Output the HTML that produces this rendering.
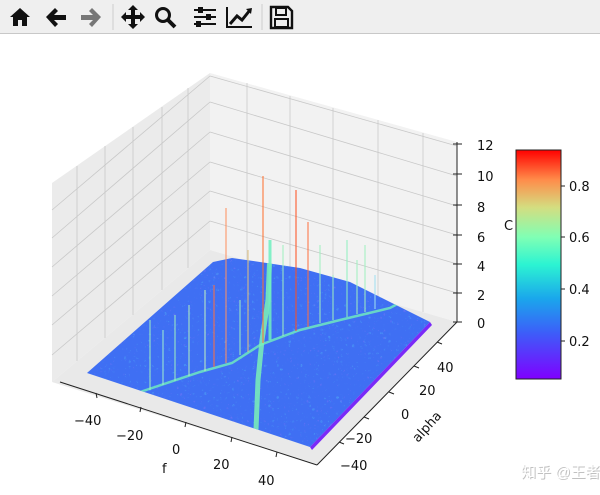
<!DOCTYPE html>
<html><head><meta charset="utf-8"><style>
html,body{margin:0;padding:0;width:600px;height:495px;overflow:hidden;background:#fff;font-family:"Liberation Sans","DejaVu Sans",sans-serif}
.tb{position:absolute;left:0;top:0;width:600px;height:33px;background:#efefef;border-bottom:1px solid #c8c8c8}
svg{position:absolute;left:0;top:0}
</style></head><body>
<div class="tb">
<svg width="600" height="33" viewBox="0 0 600 33">
<g fill="#111">
<path d="M10 17 L20 8 L30 17 L27 17 L27 26 L22 26 L22 20 L18 20 L18 26 L13 26 L13 17 Z"/>
<path d="M46 17 L55 8 L58 11 L54 15 L66 15 L66 20 L54 20 L58 24 L55 27 Z"/>
</g>
<path fill="#777" d="M101 17 L92 8 L89 11 L93 15 L81 15 L81 20 L93 20 L89 24 L92 27 Z"/>
<line x1="113" y1="4" x2="113" y2="30" stroke="#ccc"/>
<path fill="#111" d="M133 5 L138 10 L135 10 L135 15 L140 15 L140 12 L145 17 L140 22 L140 19 L135 19 L135 24 L138 24 L133 29 L128 24 L131 24 L131 19 L126 19 L126 22 L121 17 L126 12 L126 15 L131 15 L131 10 L128 10 Z"/>
<circle cx="163" cy="15" r="6.5" fill="none" stroke="#111" stroke-width="3"/>
<line x1="168" y1="20" x2="175" y2="27" stroke="#111" stroke-width="4"/>
<g fill="#111">
<rect x="194" y="9" width="22" height="2"/><rect x="194" y="16" width="22" height="2"/><rect x="194" y="23" width="22" height="2"/>
<rect x="198" y="7" width="5" height="6"/><rect x="206" y="14" width="5" height="6"/><rect x="196" y="21" width="5" height="6"/>
</g>
<path d="M227 7 L227 27 L252 27" fill="none" stroke="#111" stroke-width="2"/>
<path d="M230 24 L237 16 L242 20 L250 10" fill="none" stroke="#111" stroke-width="3"/>
<path d="M246 9 L252 8 L251 14 Z" fill="#111"/>
<line x1="262" y1="4" x2="262" y2="30" stroke="#ccc"/>
<path d="M271 7 L288 7 L292 11 L292 28 L271 28 Z" fill="none" stroke="#111" stroke-width="2.4"/>
<rect x="276" y="8" width="10" height="7" fill="none" stroke="#111" stroke-width="2"/>
<rect x="275" y="19" width="13" height="8" fill="none" stroke="#111" stroke-width="2"/>
</svg></div>

<svg width="600" height="495" viewBox="0 0 600 495">
<defs>
<linearGradient id="cb" x1="0" y1="1" x2="0" y2="0">
<stop offset="0" stop-color="#7f00ff"/><stop offset="0.2" stop-color="#3d5df9"/><stop offset="0.35" stop-color="#1aa6ec"/><stop offset="0.5" stop-color="#2cf4d2"/><stop offset="0.62" stop-color="#80ffb4"/><stop offset="0.75" stop-color="#d4dd80"/><stop offset="0.87" stop-color="#ff8c4a"/><stop offset="1" stop-color="#ff0000"/>
</linearGradient>
<clipPath id="sc"><polygon points="87,373 213,262 232,258 260,262 300,268 350,282 430,322 310,447"/></clipPath>
<filter id="n" x="0" y="0" width="100%" height="100%"><feTurbulence baseFrequency="0.25" numOctaves="2" seed="3"/><feColorMatrix values="0 0 0 0 0.1  0 0 0 0 0.6  0 0 0 0 0.95  0 0 0 1.6 -0.75"/></filter>
<filter id="n2" x="0" y="0" width="100%" height="100%"><feTurbulence baseFrequency="0.3" numOctaves="2" seed="9"/><feColorMatrix values="0 0 0 0 0.4  0 0 0 0 0.2  0 0 0 0 1  0 0 0 1.6 -0.8"/></filter>
</defs>
<polygon points="52,183 210,73 210,250 52,382" fill="#ebebeb"/>
<polygon points="210,73 457,142 457,322 210,250" fill="#f2f2f2"/>
<polygon points="52,382 210,250 457,322 317,465" fill="#e9e9e9"/>
<g stroke="#c8c8c8" stroke-width="0.8" fill="none">
<line x1="247" y1="83" x2="247" y2="261"/><line x1="290" y1="96" x2="290" y2="273"/><line x1="333" y1="108" x2="333" y2="286"/><line x1="378" y1="120" x2="378" y2="299"/><line x1="423" y1="133" x2="423" y2="312"/>
<line x1="77" y1="166" x2="77" y2="361"/><line x1="105" y1="146" x2="105" y2="338"/><line x1="133" y1="127" x2="133" y2="315"/><line x1="162" y1="107" x2="162" y2="290"/><line x1="188" y1="88" x2="188" y2="268"/>
<line x1="210" y1="221" x2="457" y2="293"/><line x1="210" y1="191" x2="457" y2="264"/><line x1="210" y1="162" x2="457" y2="235"/><line x1="210" y1="132" x2="457" y2="206"/><line x1="210" y1="102" x2="457" y2="176"/><line x1="210" y1="76" x2="457" y2="146"/>
<line x1="52" y1="355" x2="210" y2="221"/><line x1="52" y1="325" x2="210" y2="191"/><line x1="52" y1="296" x2="210" y2="162"/><line x1="52" y1="267" x2="210" y2="132"/><line x1="52" y1="238" x2="210" y2="102"/><line x1="52" y1="210" x2="210" y2="76"/>
</g>
<g clip-path="url(#sc)">
<rect x="80" y="250" width="360" height="205" fill="#3f6ff3"/>
<rect x="80" y="250" width="360" height="205" filter="url(#n)" opacity="0.8"/>
<rect x="80" y="250" width="360" height="205" filter="url(#n2)" opacity="0.7"/>
<path d="M140 392 L200 372 L232 363 L260 345 L300 330 L340 320 L390 308 L405 300" stroke="#6fe9c0" stroke-width="2.5" fill="none" opacity="0.85"/>
<path d="M270 250 L268 300 L262 340 L258 380 L256 430" stroke="#7bf2b6" stroke-width="5" fill="none" opacity="0.85"/>
</g>
<polygon points="310,447 430,322 432,325 312,450" fill="#7a2af8"/>
<g stroke-width="1.2" opacity="0.85">
<line x1="150" y1="390" x2="150" y2="320" stroke="#9ff0c0"/>
<line x1="163" y1="385" x2="163" y2="330" stroke="#9ff0d0"/>
<line x1="175" y1="381" x2="175" y2="315" stroke="#a0f0c0"/>
<line x1="189" y1="376" x2="189" y2="305" stroke="#b0f0c0"/>
<line x1="205" y1="371" x2="205" y2="290" stroke="#c0f0c0"/>
<line x1="214" y1="367" x2="214" y2="285" stroke="#ff7040"/>
<line x1="226" y1="363" x2="226" y2="208" stroke="#ff9060"/>
<line x1="240" y1="355" x2="240" y2="300" stroke="#a0f0c0"/>
<line x1="248" y1="352" x2="248" y2="250" stroke="#e0c080"/>
<line x1="263" y1="343" x2="263" y2="176" stroke="#ff7030"/>
<line x1="270" y1="340" x2="270" y2="240" stroke="#70f0c0" stroke-width="3"/>
<line x1="283" y1="336" x2="283" y2="245" stroke="#a0f0c0"/>
<line x1="296" y1="331" x2="296" y2="190" stroke="#ff5020"/>
<line x1="308" y1="327" x2="308" y2="222" stroke="#ff7040"/>
<line x1="320" y1="323" x2="320" y2="245" stroke="#a0f0c0"/>
<line x1="333" y1="320" x2="333" y2="275" stroke="#a0f0c0"/>
<line x1="347" y1="317" x2="347" y2="240" stroke="#90f0c0"/>
<line x1="357" y1="314" x2="357" y2="260" stroke="#a0f0c0"/>
<line x1="365" y1="312" x2="365" y2="245" stroke="#a0f0c0"/>
<line x1="375" y1="309" x2="375" y2="275" stroke="#a0e0f0"/>
</g>
<g stroke="#222" stroke-width="1" fill="none">
<line x1="60" y1="382" x2="317" y2="465"/>
<line x1="317" y1="465" x2="457" y2="322"/>
<line x1="457" y1="142" x2="457" y2="322"/>
<line x1="96" y1="393" x2="97" y2="398"/><line x1="141" y1="407" x2="140" y2="412"/><line x1="186" y1="422" x2="185" y2="427"/><line x1="232" y1="437" x2="231" y2="442"/><line x1="277" y1="452" x2="276" y2="457"/>
<line x1="339" y1="442" x2="344" y2="444"/><line x1="364" y1="417" x2="369" y2="419"/><line x1="389" y1="392" x2="394" y2="394"/><line x1="414" y1="366" x2="419" y2="368"/><line x1="437" y1="342" x2="442" y2="344"/>
<line x1="453" y1="144" x2="462" y2="144"/><line x1="453" y1="174" x2="462" y2="174"/><line x1="453" y1="205" x2="462" y2="205"/><line x1="453" y1="235" x2="462" y2="235"/><line x1="453" y1="264" x2="462" y2="264"/><line x1="453" y1="293" x2="462" y2="293"/><line x1="453" y1="322" x2="462" y2="322"/>
</g>
<g font-size="13" fill="#111" font-family="DejaVu Sans,Liberation Sans,sans-serif">
<text x="477" y="150">12</text><text x="477" y="181">10</text><text x="477" y="212">8</text><text x="477" y="242">6</text><text x="477" y="271">4</text><text x="477" y="300">2</text><text x="477" y="328">0</text>
<text x="504" y="230">C</text>
<text x="74" y="425">−40</text><text x="116" y="440">−20</text><text x="172" y="454">0</text><text x="213" y="469">20</text><text x="258" y="485">40</text>
<text x="162" y="473">f</text>
<text x="340" y="470">−40</text><text x="345" y="443">−20</text><text x="401" y="419">0</text><text x="419" y="395">20</text><text x="437" y="372">40</text>
<text x="0" y="0" transform="translate(418,443) rotate(-48)">alpha</text>
</g>
<rect x="516" y="150" width="45" height="229" fill="url(#cb)" stroke="#222" stroke-width="1"/>
<g stroke="#222"><line x1="561" y1="186" x2="565" y2="186"/><line x1="561" y1="237" x2="565" y2="237"/><line x1="561" y1="289" x2="565" y2="289"/><line x1="561" y1="341" x2="565" y2="341"/></g>
<g font-size="13" fill="#111" font-family="DejaVu Sans,Liberation Sans,sans-serif">
<text x="569" y="191">0.8</text><text x="569" y="242">0.6</text><text x="569" y="294">0.4</text><text x="569" y="346">0.2</text>
</g>
<text x="522" y="478" font-size="15" fill="#999" opacity="0.6" font-family="Liberation Sans,Noto Sans CJK SC,sans-serif">知乎 @王者</text>
<text x="521" y="477" font-size="15" fill="#fff" font-family="Liberation Sans,Noto Sans CJK SC,sans-serif">知乎 @王者</text>
</svg>
</body></html>
